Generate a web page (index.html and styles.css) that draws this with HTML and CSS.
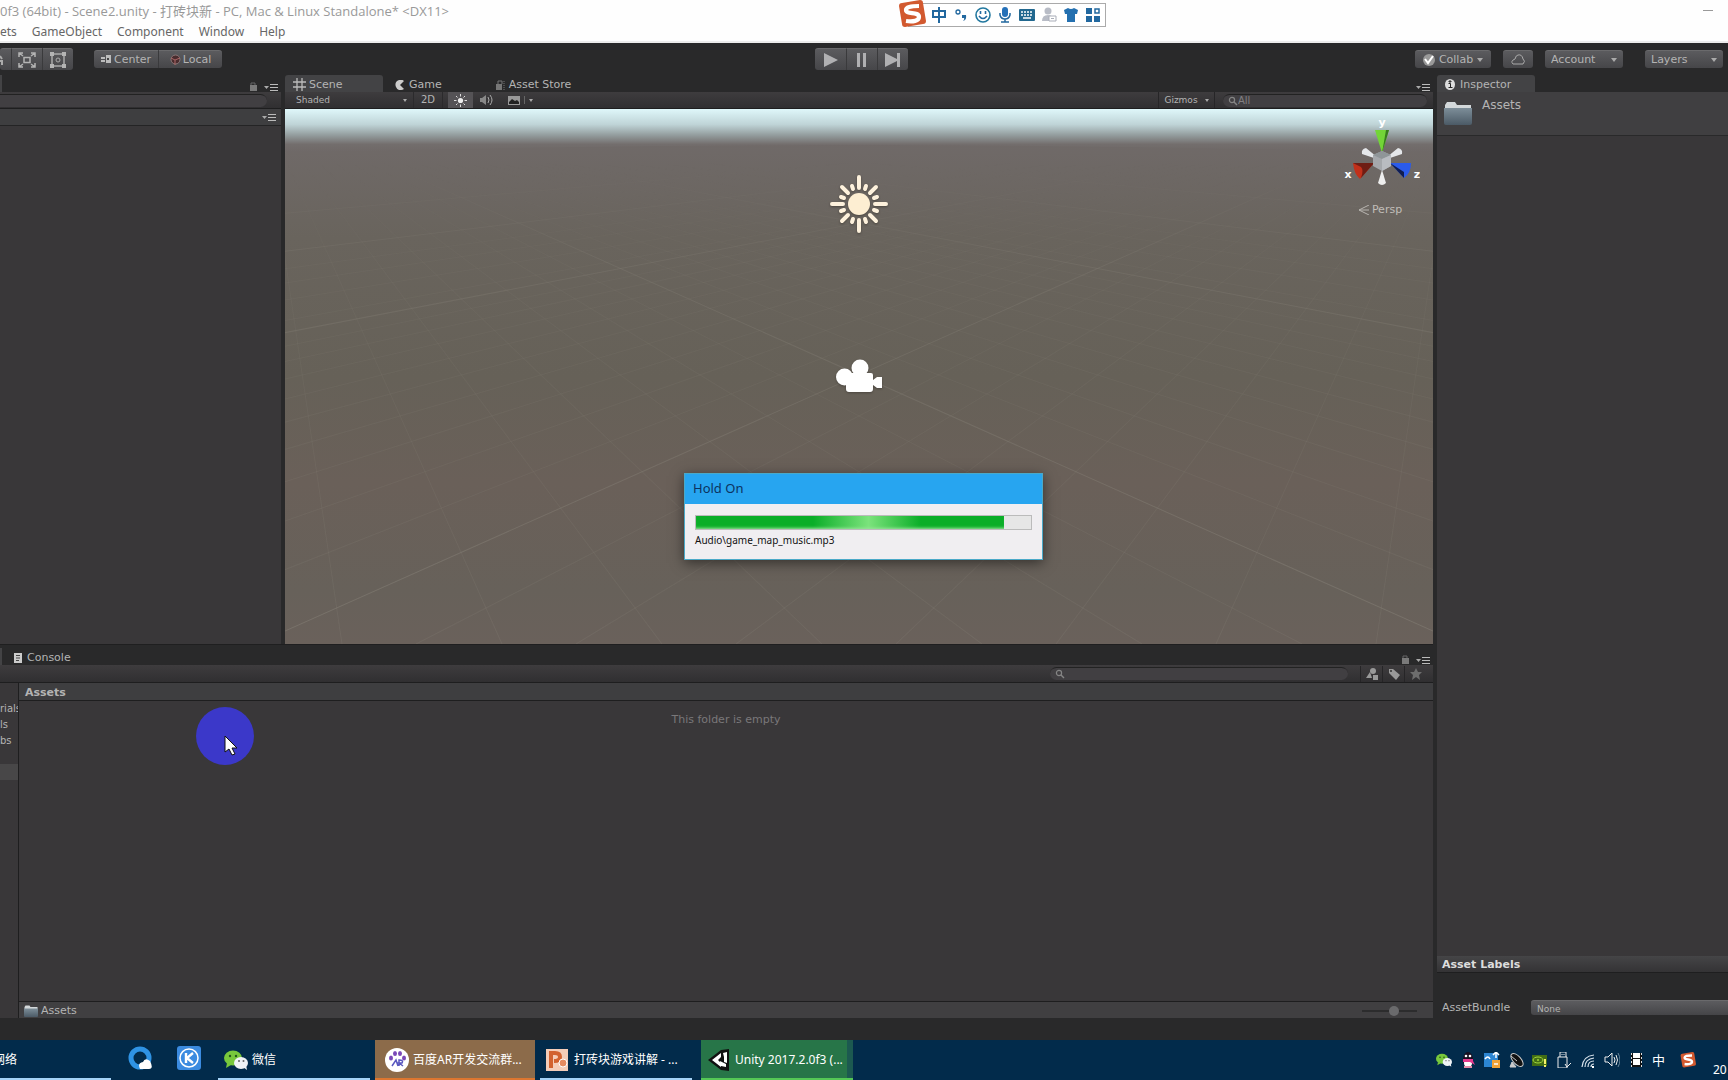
FILE: index.html
```html
<!DOCTYPE html>
<html lang="en">
<head>
  <meta charset="UTF-8" />
  <meta name="viewport" content="width=device-width, initial-scale=1.0" />
  <title>Scene2.unity</title>
  <link rel="stylesheet" href="styles.css">
</head>
<body>
  <!-- shared shapes -->
  <svg class="defs" width="0" height="0" aria-hidden="true">
    <symbol id="lock" viewBox="0 0 9 10"><path d="M2 5V2h4v3" fill="none" stroke="#666" stroke-width="1"/><path d="M1 4h7v6H1z" fill="#7a7a7a"/></symbol>
    <symbol id="menu" viewBox="0 0 14 8"><path d="M0 3h5L2.5 6z" fill="#aaa"/><path d="M6 1.5h8M6 4.5h8M6 7.5h8" stroke="#bbb" stroke-width="1"/></symbol>
    <symbol id="search" viewBox="0 0 10 10"><circle cx="4" cy="4" r="2.6" fill="none" stroke="#858585" stroke-width="1.2"/><path d="M6 6l3 3" stroke="#858585" stroke-width="1.4"/></symbol>
    <symbol id="wechat" viewBox="0 0 24 20"><ellipse cx="9" cy="8" rx="9" ry="7.5" fill="#78c83c"/><path d="M3 13l-1 5 5-3z" fill="#78c83c"/><circle cx="6" cy="6" r="1.2" fill="#24551c"/><circle cx="12" cy="6" r="1.2" fill="#24551c"/><ellipse cx="17" cy="13" rx="7" ry="6" fill="#f0f3f6"/><path d="M19 17l4 3-1-5z" fill="#f0f3f6"/><circle cx="15" cy="11" r="1" fill="#666"/><circle cx="19.500" cy="11" r="1" fill="#666"/></symbol>
    <symbol id="sogou" viewBox="0 0 28 28"><path d="M1 6Q1 3 4 3L22 0q3 0 3 3l3 18q0 3-3 3L7 27q-3 0-3-3z" fill="#d2592f"/><path d="M21 6Q8 6 8 10c0 5 13 1 13 7 0 4-6 5-13 4" fill="none" stroke="#fff" stroke-width="4.200"/></symbol>
    <symbol id="folder" viewBox="0 0 28 24"><path d="M1 4l2-3h8l2 3h14v6H1z" fill="#d3d8da"/><path d="M0 7h28v15q0 2-2 2H2q-2 0-2-2z" fill="url(#folderFill)"/></symbol>
    <linearGradient id="folderFill" x2="0" y2="1"><stop stop-color="#7d8e99"/><stop offset="1" stop-color="#4b5a66"/></linearGradient>
  </svg>

  <header class="titlebar">
    <div class="window-title">0f3 (64bit) - Scene2.unity - 打砖块新 - PC, Mac &amp; Linux Standalone* &lt;DX11&gt;</div>
    <button class="minimize" aria-label="Minimize"></button>
    <nav class="menubar">
      <a href="#">ets</a><a href="#">GameObject</a><a href="#">Component</a><a href="#">Window</a><a href="#">Help</a>
    </nav>
  </header>

  <div class="ime">
    <svg class="ime-logo" width="28" height="28"><use href="#sogou"/></svg>
    <svg width="16" height="16" viewBox="0 0 16 16"><path d="M2 4h12v6H2zM8 0v16" fill="none" stroke="#22689f" stroke-width="2"/></svg>
    <svg width="16" height="16" viewBox="0 0 16 16"><circle cx="5" cy="5" r="2" fill="none" stroke="#22689f" stroke-width="1.300"/><path d="M9 8h4q1 5-3 6 2-2 1-3H9z" fill="#22689f"/></svg>
    <svg width="16" height="16" viewBox="0 0 16 16"><circle cx="8" cy="8" r="7" fill="none" stroke="#22789f" stroke-width="1.600"/><path d="M4 9q4 5 8 0M5.500 4v3M10.500 4v3" fill="none" stroke="#22689f" stroke-width="1.600"/></svg>
    <svg width="16" height="16" viewBox="0 0 16 16"><rect x="5" y="0" width="6" height="10" rx="3" fill="#2470b8"/><path d="M3 6v2q1 4 5 4t5-4V6M8 12v3M4 15h8" fill="none" stroke="#22689f" stroke-width="1.500"/></svg>
    <svg width="16" height="16" viewBox="0 0 16 16"><rect x="0" y="2" width="16" height="12" rx="1" fill="#22688f"/><path d="M2 5h12M2 8h12" stroke="#fff" stroke-width="1.500" stroke-dasharray="2 1"/><path d="M4 11h8" stroke="#fff" stroke-width="1.500"/></svg>
    <svg width="16" height="16" viewBox="0 0 16 16"><circle cx="7" cy="4" r="3.500" fill="#b8bcc6"/><path d="M1 14q0-6 6-6t6 6z" fill="#b8bcc6"/><path d="M8 9h7v5H8zM10 11.500h3" fill="#fff" stroke="#a9adb8"/></svg>
    <svg width="16" height="16" viewBox="0 0 16 16"><path d="M1 3l4-2q3 2 6 0l4 2-1 4h-2v8H4V7H2z" fill="#2470b0"/></svg>
    <svg width="16" height="16" viewBox="0 0 16 16"><path d="M1 1h6v6H1zM1 9h6v6H1zM9 9h6v6H9z" fill="#22689f"/><path d="M10 2h4v4h-4z" fill="none" stroke="#22689f" stroke-width="1.500"/></svg>
  </div>

  <div class="toolbar">
    <div class="edit-tools">
      <div class="group tall">
        <button class="tool-cut" aria-label="Rotate"><svg width="3" height="14" viewBox="0 0 3 14"><path d="M0 3l2 3M0 8h2v4" fill="none" stroke="#aaa" stroke-width="2"/></svg></button>
        <button aria-label="Scale"><svg width="18" height="16" viewBox="0 0 18 16"><g fill="none" stroke="#b4b4b4" stroke-width="1.500"><path d="M6 5.500h6v5H6z"/><path d="M1 5V1h4M13 1h4v4M17 11v4h-4M5 15H1v-4M1 1l4 3M17 1l-4 3M1 15l4-3M17 15l-4-3"/></g></svg></button>
        <button aria-label="Rect"><svg width="18" height="18" viewBox="0 0 18 18"><path d="M3 3h12v12H3z" fill="none" stroke="#aaa" stroke-width="1.500"/><circle cx="9" cy="9" r="2" fill="none" stroke="#aaa"/><path d="M1 1h4v4H1zM13 1h4v4h-4zM1 13h4v4H1zM13 13h4v4h-4z" fill="#b4b4b4"/></svg></button>
      </div>
      <div class="group pivot">
        <button><svg width="11" height="9" viewBox="0 0 11 9"><path d="M0 2h4v2H0zM0 5h4v2H0zM5 0h5v8H5z" fill="#bbb"/><path d="M6 3h2v2H6z" fill="#444"/></svg>Center</button>
        <button><svg width="11" height="11" viewBox="0 0 11 11"><circle cx="5.500" cy="5.500" r="4.500" fill="#4a2c2e" stroke="#8a7777"/><path d="M1 4l4 2 5-2M5 6v5" fill="none" stroke="#a66"/></svg>Local</button>
      </div>
    </div>
    <div class="group tall play">
      <button aria-label="Play"><svg width="14" height="14" viewBox="0 0 14 14"><path d="M0 0l14 7-14 7z"/></svg></button>
      <button aria-label="Pause"><svg width="10" height="14" viewBox="0 0 10 14"><path d="M0 0h3v14H0zM6 0h3v14H6z"/></svg></button>
      <button aria-label="Step"><svg width="16" height="14" viewBox="0 0 16 14"><path d="M0 0l12 6V0h3v14h-3V8L0 14z"/></svg></button>
    </div>
    <div class="services">
      <button class="btn collab"><svg width="12" height="12" viewBox="0 0 12 12"><circle cx="6" cy="6" r="6" fill="#999"/><path d="M2 5l3 4 5-7" fill="none" stroke="#fff" stroke-width="2"/></svg>Collab<i class="caret"></i></button>
      <button class="btn cloud" aria-label="Services"><svg width="14" height="11" viewBox="0 0 14 11"><path d="M2 10h10q3-3 0-5-1-5-5-4-2 0-3 4-5 2-2 5z" fill="none" stroke="#aaa"/></svg></button>
      <label class="pick btn"><select aria-label="Account"><option>Account</option></select></label>
      <label class="pick btn layers"><select aria-label="Layers"><option>Layers</option></select></label>
    </div>
  </div>

  <main class="workspace">
    <div class="editor">
      <section class="hierarchy">
        <div class="tabs hierarchy-tabs"><span class="tab-edge"></span><span class="panel-tools"><svg width="9" height="10"><use href="#lock"/></svg><svg width="14" height="8"><use href="#menu"/></svg></span></div>
        <div class="bar"><input class="field hierarchy-search" type="text" aria-label="Search hierarchy"></div>
        <div class="subhead"><svg width="14" height="8"><use href="#menu"/></svg></div>
      </section>

      <section class="scene">
        <div class="tabs">
          <button class="tab active"><svg width="13" height="13" viewBox="0 0 13 13"><path d="M4 0v13M9 0v13M0 4h13M0 9h13" stroke="#bbb" stroke-width="1.300"/></svg>Scene</button>
          <button class="tab game-tab"><svg width="10" height="10" viewBox="0 0 10 10"><path d="M9 1L5 5l4 4Q3 12 1 7T4 0q3-1 5 1z" fill="#ccc"/></svg>Game</button>
          <button class="tab store-tab"><svg width="9" height="10" viewBox="0 0 9 10"><path d="M2 4V1h4v3" fill="none" stroke="#777"/><path d="M0 4h6v6H0z" fill="#777"/><path d="M8 1v9" stroke="#777" stroke-dasharray="1 1"/></svg>Asset Store</button>
          <span class="panel-tools"><svg width="14" height="8"><use href="#menu"/></svg></span>
        </div>
        <div class="bar scene-bar">
          <label class="pick shading"><select aria-label="Draw mode"><option>Shaded</option></select></label>
          <button class="mode">2D</button>
          <button class="on" aria-label="Lighting"><svg width="13" height="13" viewBox="0 0 13 13"><circle cx="6.500" cy="6.500" r="2.600" fill="#eee"/><path d="M6.500 0v2.500M6.500 10.500V13M0 6.500h2.500M10.500 6.500H13M2 2l1.500 1.500M9.500 9.500L11 11M11 2L9.500 3.500M2 11l1.500-1.500" stroke="#ddd"/></svg></button>
          <button aria-label="Audio"><svg width="14" height="12" viewBox="0 0 14 12"><path d="M0 4h2l4-3v10L2 8H0z" fill="#888"/><path d="M8 3q2 3 0 6M10 1q4 5 0 10" fill="none" stroke="#aaa"/></svg></button>
          <button class="effects" aria-label="Effects"><svg width="12" height="9" viewBox="0 0 12 9"><path d="M0 0h12v9H0z" fill="#999"/><path d="M1 8V6l3-3 3 2 2-1 2 2v2z" fill="#222"/></svg><i class="split"></i><i class="caret"></i></button>
          <button class="gizmos">Gizmos<i class="caret"></i></button>
          <label class="searchbox scene-search"><svg width="10" height="10"><use href="#search"/></svg><input type="text" value="All" aria-label="Search scene"></label>
        </div>

        <div class="viewport">
          <svg class="ground" viewBox="0 0 1148 534" preserveAspectRatio="none" aria-hidden="true">
            <defs>
              <linearGradient id="land" x2="0" y2="1"><stop offset=".05" stop-color="#706a69"/><stop offset=".24" stop-color="#69645d"/><stop offset=".5" stop-color="#666158"/><stop offset=".7" stop-color="#6a6059"/><stop offset=".9" stop-color="#67615a"/><stop offset="1" stop-color="#6a615b"/></linearGradient>
              <linearGradient id="sky" x2="0" y2="1"><stop stop-color="#dff7fa"/><stop offset=".35" stop-color="#bfd4d7"/><stop offset=".6" stop-color="#929b9c"/><stop offset=".8" stop-color="#736e6d"/><stop offset="1" stop-color="#706a69" stop-opacity="0"/></linearGradient>
              <linearGradient id="fade" x2="0" y2="1"><stop offset=".1" stop-color="#000"/><stop offset=".3" stop-color="#888"/><stop offset="1" stop-color="#fff"/></linearGradient>
              <mask id="far" maskUnits="userSpaceOnUse" x="0" y="0" width="1148" height="534"><path d="M0 0h1148v534H0z" fill="url(#fade)"/></mask>
              <!-- one family of ground lines, all meeting at a vanishing point -->
              <g id="lines" fill="none">
                <path stroke="#8a857d" stroke-opacity=".2" d="M1170 0L1091 534M1170 0L931 534M1170 0L771 534M1170 0L611 534M1170 0L451 534M1170 0L291 534M1170 0L131 534M1170 0L-189 534M1170 0L-349 534M1170 0L-509 534M1170 0L-669 534M1170 0L-829 534M1170 0L-989 534M1170 0L-1149 534M1170 0L-1309 534M1170 0L-1469 534M1170 0L-1789 534M1170 0L-2109 534M1170 0L-2429 534M1170 0L-2749 534"/>
                <path stroke="#918b83" stroke-opacity=".4" d="M1170 0L-29 534M1170 0L-1629 534M1170 0L-3229 534M1170 0L-4829 534"/>
              </g>
            </defs>
            <path d="M0 0h1148v534H0z" fill="url(#land)"/>
            <g mask="url(#far)"><use href="#lines"/><use href="#lines" transform="matrix(-1 0 0 1 1148 0)"/></g>
            <path d="M0 0h1148v44Q574 28 0 44z" fill="url(#sky)"/>
          </svg>
          <svg class="light" width="60" height="60" viewBox="-30 -30 60 60" aria-hidden="true">
            <g stroke-linecap="round" stroke="#fdf1dc" stroke-width="4">
              <path d="M0-27V-16M0 27V16M-27 0H-16M27 0H16M-17-17l6 6M17-17l-6 6M-17 17l6-6M17 17l-6-6"/>
              <path d="M-7-18l1 3M7-18l-1 3M-7 18l1-3M7 18l-1-3M-18-7l3 1M-18 7l3-1M18-7l-3 1M18 7l-3-1"/>
            </g>
            <circle r="11" fill="#fdeed2"/>
          </svg>
          <svg class="camera" width="46" height="34" viewBox="0 0 46 34" fill="#fff" aria-hidden="true"><circle cx="8.500" cy="18" r="8.500"/><circle cx="24" cy="9" r="8.500"/><path d="M10 14h25q2 0 2 2v5l4-3h5v11h-5l-4-3v4q0 3-3 3H13q-3 0-3-3z"/></svg>
          <div class="gizmo">
            <svg width="76" height="72" viewBox="0 0 76 72" aria-hidden="true">
              <text x="38" y="8" class="axis">y</text><text x="4" y="60" class="axis">x</text><text x="73" y="60" class="axis">z</text>
              <path d="M18 36q-1-5 4-6l11 9-3 1zM58 36q1-5-4-6l-11 9 3 1z" fill="#e5e7ea"/>
              <path d="M31 12h14l-7 23z" fill="#73d537"/><path d="M42 12h3l-7 23z" fill="#387c1f"/>
              <path d="M9 45h21L16 61q-6-5-7-16z" fill="#c1301a"/><path d="M9 45h21L17 60q3-8 0-11z" fill="#6e1d14"/>
              <path d="M46 45h21q0 10-7 15z" fill="#2b5bea"/><path d="M46 45l14 15v-6z" fill="#101d50"/>
              <path d="M34 65l4-13 4 13q-4 4-8 0z" fill="#eee"/>
              <path d="M29 37l9-4 9 4v11l-9 5-9-5z" fill="#a5a8ac"/><path d="M29 37l9-4 9 4-9 4z" fill="#8f9598"/><path d="M38 41l9-4v11l-9 5z" fill="#b9bcc1"/>
            </svg>
            <button class="persp"><svg width="12" height="10" viewBox="0 0 12 10"><path d="M11 0L1 5l10 5M1 5h10" fill="none" stroke="#b8b5b0"/></svg>Persp</button>
          </div>
        </div>
      </section>

      <section class="project">
        <div class="tabs project-tabs">
          <span class="tab-edge"></span>
          <button class="tab console-tab"><svg width="8" height="10" viewBox="0 0 8 10"><path d="M0 0h8v10H0z" fill="#ccc"/><path d="M2 2.500h4M2 5h4M2 7.500h3" stroke="#444"/></svg>Console</button>
          <span class="panel-tools"><svg width="9" height="10"><use href="#lock"/></svg><svg width="14" height="8"><use href="#menu"/></svg></span>
        </div>
        <div class="bar project-bar">
          <label class="searchbox project-search"><svg width="10" height="10"><use href="#search"/></svg><input type="text" aria-label="Search project"></label>
          <button aria-label="Filter by type"><svg width="12" height="12" viewBox="0 0 12 12" fill="#999"><circle cx="7" cy="3" r="3"/><path d="M0 10l4-6 2 6zM7 7h5v5H7z"/></svg></button>
          <button aria-label="Filter by label"><svg width="12" height="12" viewBox="0 0 12 12"><path d="M1 1h4l7 6-4 5-7-7z" fill="#999"/><circle cx="3" cy="3" r="1" fill="#333"/></svg></button>
          <button aria-label="Favorites"><svg width="12" height="12" viewBox="0 0 12 12"><path d="M6 0l2 4h4L9 7l1 5-4-3-4 3 1-5-3-3h4z" fill="#6d6d6d"/></svg></button>
        </div>
        <div class="project-body">
          <ul class="tree"><li>rials</li><li>ls</li><li>bs</li><li></li><li class="selected"></li></ul>
          <div class="browser">
            <h2 class="crumb">Assets</h2>
            <p class="empty">This folder is empty</p>
            <div class="footer"><svg width="14" height="12"><use href="#folder"/></svg><span>Assets</span><input class="zoom" type="range" min="0" max="100" value="60" aria-label="Icon size"></div>
          </div>
        </div>
      </section>
    </div>

    <aside class="inspector">
      <div class="tabs"><button class="tab active inspector-tab"><svg width="10" height="11" viewBox="0 0 10 11"><ellipse cx="5" cy="5.500" rx="5" ry="5.500" fill="#ddd"/><path d="M4 2h2v1H4zM3.500 4.500H5.500V8.500M3.500 8.500h4" stroke="#222" fill="none"/></svg>Inspector</button></div>
      <div class="asset-head"><svg width="28" height="24"><use href="#folder"/></svg><span>Assets</span></div>
      <div class="inspector-space"></div>
      <h2 class="labels-head">Asset Labels</h2>
      <div class="labels-body"><label for="bundle">AssetBundle</label><select id="bundle"><option>None</option></select></div>
    </aside>
  </main>

  <footer class="taskbar">
    <button class="task task-net">网络</button>
    <button class="task-icon" aria-label="QQ Browser"><svg width="24" height="24" viewBox="0 0 24 24"><circle cx="12" cy="12" r="9" fill="none" stroke="#2f93e4" stroke-width="5"/><path d="M12 23q-3-6 3-7 2-5 7-1 4 8-1 8z" fill="#fff"/></svg></button>
    <button class="task-icon" aria-label="KuGou"><svg width="24" height="24" viewBox="0 0 24 24"><rect width="24" height="24" rx="3" fill="#3b8be0"/><circle cx="12" cy="12" r="9" fill="none" stroke="#fff" stroke-width="1.500"/><path d="M9 7v10M16 7l-6 5 6 5" fill="none" stroke="#fff" stroke-width="2.400"/></svg></button>
    <button class="task task-wechat"><svg width="24" height="20"><use href="#wechat"/></svg>微信</button>
    <button class="task alert"><svg width="24" height="24" viewBox="0 0 24 24"><circle cx="12" cy="12" r="12" fill="#fff"/><g fill="#7a48b8"><ellipse cx="6" cy="10" rx="2" ry="2.500"/><ellipse cx="10" cy="5.500" rx="2" ry="2.500"/><ellipse cx="15" cy="5.500" rx="2" ry="2.500"/><ellipse cx="19" cy="10" rx="2" ry="2.500"/></g><path d="M7 18l4-6 2 6M14 18v-6q5 0 3 3h-3l4 3" fill="none" stroke="#5a58c0" stroke-width="1.500"/></svg>百度AR开发交流群...</button>
    <button class="task task-ppt"><svg width="22" height="22" viewBox="0 0 22 22"><path d="M0 0h22v22H0z" fill="#f4cdb8"/><path d="M5 19V4h4q5 0 5 4t-6 4" fill="none" stroke="#d2622f" stroke-width="4"/><circle cx="17" cy="14" r="4" fill="#e58b60" stroke="#fff"/></svg>打砖块游戏讲解 - ...</button>
    <button class="task current"><svg width="22" height="22" viewBox="0 0 22 22"><path d="M0 11L13 1l8-1v22l-8-1z" fill="#111"/><path d="M4 11l9-7v4l-3 3 3 3v4zM15 4l4-1v11l-3-1V8zM12 12l6 3v3l-5-1z" fill="#fff"/></svg>Unity 2017.2.0f3 (...</button>
    <div class="tray">
      <svg width="16" height="16"><use href="#wechat"/></svg>
      <svg width="16" height="16" viewBox="0 0 16 16"><ellipse cx="8" cy="8" rx="5" ry="8" fill="#1a1020"/><ellipse cx="8" cy="11" rx="4" ry="4" fill="#fff"/><path d="M3 7h10v2l2 4-5-3H3z" fill="#e33a8e"/><circle cx="6" cy="4" r="1.300" fill="#fff"/><circle cx="10" cy="4" r="1.300" fill="#fff"/><path d="M4 14h8v2H4z" fill="#e68aa8"/></svg>
      <svg width="16" height="16" viewBox="0 0 16 16"><path d="M0 1h14v14H0z" fill="#2c86d3"/><path d="M1 7q3-4 5 0M12 0v6M9 3l3-3 3 3" fill="none" stroke="#fff" stroke-width="1.500"/><path d="M8 8h8v8H8z" fill="#f0a337"/><path d="M10 12h4" stroke="#fff" stroke-width="1.500"/></svg>
      <svg width="16" height="16" viewBox="0 0 16 16"><ellipse cx="9" cy="8" rx="4" ry="8" transform="rotate(-42 9 8)" fill="#111" stroke="#ccc"/><path d="M3 4l6 5M4 10l-2 5h6z" fill="#ccc" stroke="#ccc"/></svg>
      <svg width="16" height="16" viewBox="0 0 16 16"><path d="M0 3h15v11H0z" fill="#426d15"/><ellipse cx="6" cy="8" rx="5" ry="3" fill="none" stroke="#a2d83c"/><circle cx="6" cy="8" r="1" fill="#a2d83c"/><path d="M13 7v5M13 13v2" stroke="#f4f26a" stroke-width="2"/></svg>
      <svg width="16" height="16" viewBox="0 0 16 16"><path d="M4 5V0h6v5M2 5h9v11H2z" fill="none" stroke="#eee"/><path d="M9 12l2 3 4-4M6 2v1M8 2v1" fill="none" stroke="#eee"/></svg>
      <svg width="16" height="16" viewBox="0 0 16 16"><path d="M2 15Q3 4 14 3M5 15Q5 7 14 6M8 15q0-6 6-6M11 15q0-3 3-3" fill="none" stroke="#dce6ee" stroke-width="1.200"/><path d="M12 14h2v2h-2z" fill="#fff"/></svg>
      <svg width="16" height="16" viewBox="0 0 16 16"><path d="M1 5h3l4-4v13l-4-4H1zM10 5q2 3 0 6M12 3q3 5 0 10" fill="none" stroke="#eee"/><path d="M14 1q4 7 0 14" fill="none" stroke="#68869a"/></svg>
      <svg width="16" height="16" viewBox="0 0 16 16"><path d="M3 1h11v14H3z" fill="#111"/><path d="M5 1h7v5H5zM5 7h7v6H5z" fill="#fff"/><path d="M3.500 1v14M13.500 1v14" stroke="#ddd" stroke-dasharray="2 2"/></svg>
      <span class="ime-state">中</span>
      <svg class="tray-sogou" width="16" height="16"><use href="#sogou"/></svg>
    </div>
    <span class="clock">20</span>
  </footer>

  <div class="dialog" role="dialog" aria-labelledby="dialog-title">
    <h1 id="dialog-title">Hold On</h1>
    <div class="dialog-body">
      <progress id="import" value="92" max="100"></progress>
      <label for="import">Audio\game_map_music.mp3</label>
    </div>
  </div>

  <div class="pointer" aria-hidden="true"><svg width="14" height="21" viewBox="0 0 14 21"><path d="M1 1v16l4-3 3 6 3-1-3-6h5z" fill="#fff" stroke="#111"/></svg></div>
</body>
</html>
```
FILE: styles.css
```css
* {
  box-sizing: border-box;
  margin: 0;
  padding: 0;
}

body {
  display: flex;
  flex-direction: column;
  min-height: 100vh;
  background: #29292a;
  color: #b4b4b4;
  font-family: "DejaVu Sans", "Noto Sans CJK SC", sans-serif;
  font-size: 11px;
  line-height: 16px;
  overflow: hidden;
  position: relative;
}

button,
input,
select {
  font: inherit;
  color: inherit;
  background: none;
  border: 0;
  outline: 0;
  appearance: none;
}

svg {
  flex: none;
}

.defs {
  position: absolute;
}

/* window title and menus */
.titlebar {
  display: grid;
  grid-template-columns: 1fr auto;
  grid-template-rows: 20px 1fr;
  background: #fefefe;
  border-bottom: 2px solid #ececec;
  font-family: "Open Sans", "Noto Sans CJK SC", sans-serif;
  height: 43px;
}

.window-title {
  color: #999;
  font-size: 13px;
  line-height: 22px;
  white-space: nowrap;
}

.minimize {
  width: 10px;
  height: 1px;
  background: #999;
  margin: 10px 15px 0 0;
}

.menubar {
  display: flex;
  gap: 15px;
  font-family: "Noto Sans", sans-serif;
  font-size: 12px;
  line-height: 24px;
}

.menubar a {
  color: #666;
  text-decoration: none;
}

.ime {
  position: absolute;
  top: 3px;
  left: 908px;
  display: flex;
  align-items: center;
  gap: 6px;
  height: 24px;
  padding: 0 4px 0 22px;
  background: #fff;
  border: 1px solid #aaa;
}

.ime-logo {
  position: absolute;
  left: -11px;
  top: -4px;
}

/* main toolbar */
.toolbar {
  display: grid;
  grid-template-columns: 1fr auto 1fr;
  align-items: center;
  height: 32px;
  padding: 0 5px 0 0;
}

.edit-tools {
  display: flex;
  align-items: center;
  gap: 21px;
}

.group {
  display: flex;
}

.group button,
.btn {
  display: flex;
  align-items: center;
  justify-content: center;
  gap: 2px;
  height: 18px;
  background: linear-gradient(#5b5b5e, #464649);
  border-top: 1px solid #6a6a6c;
}

.group button + button {
  border-left: 1px solid #3a3a3c;
}

.group button:first-child {
  border-radius: 3px 0 0 3px;
}

.group button:last-child {
  border-radius: 0 3px 3px 0;
}

.tall button {
  width: 31px;
  height: 22px;
}

.tall .tool-cut {
  width: 11px;
  border-radius: 0;
  justify-content: flex-start;
}

.pivot button {
  width: 64px;
}

.play {
  fill: #b0b0b2;
}

.services {
  display: flex;
  justify-content: flex-end;
  gap: 12px;
}

.btn {
  border-radius: 3px;
}

.collab {
  width: 76px;
  gap: 4px;
}

.cloud {
  width: 30px;
}

.caret,
.pick::after {
  content: "";
  border: 3px solid transparent;
  border-top: 4px solid #aaa;
  border-bottom: 0;
}

.pick {
  display: flex;
  align-items: center;
}

.pick select {
  flex: 1;
  min-width: 0;
}

.pick.btn {
  width: 78px;
  padding: 0 6px;
}

.layers {
  margin-left: 10px;
}

/* dock layout */
.workspace {
  flex: 1;
  display: grid;
  grid-template-columns: 1fr 291px;
  gap: 4px;
  padding-bottom: 22px;
}

.editor {
  display: grid;
  grid-template-columns: 281px 1fr;
  grid-template-rows: 569fr 374fr;
  column-gap: 4px;
}

.hierarchy,
.scene,
.project,
.inspector,
.browser {
  display: flex;
  flex-direction: column;
  min-width: 0;
}

.tabs {
  display: flex;
  height: 17px;
}

.tab {
  display: flex;
  align-items: center;
  gap: 4px;
  padding: 2px 8px 0;
  height: 17px;
}

.tab.active {
  width: 98px;
  gap: 3px;
  background: #434345;
  border-radius: 3px 3px 0 0;
}

.tab-edge {
  width: 2px;
  background: #434345;
}

.game-tab {
  padding-left: 12px;
}

.store-tab {
  margin-left: 38px;
}

.panel-tools {
  display: flex;
  align-items: flex-end;
  gap: 6px;
  margin-left: auto;
  padding: 0 3px 1px 0;
}

.bar {
  display: flex;
  align-items: center;
  height: 17px;
  background: linear-gradient(#3e3c3e, #302f31);
  border-bottom: 1px solid #1e1e1f;
}

.bar button {
  display: flex;
  align-items: center;
  justify-content: center;
  height: 16px;
}

.hierarchy,
.project-body {
  background: #393739;
}

.hierarchy-tabs {
  background: #29292a;
}

.field,
.searchbox {
  height: 13px;
  background: #413f42;
  border-top: 1px solid #222;
  border-radius: 0 7px 7px 0;
}

.hierarchy-search {
  width: 267px;
}

.subhead {
  display: flex;
  align-items: center;
  justify-content: flex-end;
  height: 17px;
  padding-right: 5px;
  background: #3e3e40;
  border-bottom: 1px solid #242425;
}

.searchbox {
  display: flex;
  align-items: center;
  padding-left: 5px;
  border-radius: 7px;
}

.searchbox input {
  min-width: 0;
  flex: 1;
  height: 12px;
  color: #828082;
  font-size: 10px;
}

/* scene view */
.scene-bar {
  font-size: 9px;
}

.shading {
  width: 128px;
  padding: 0 6px 0 11px;
}

.scene-bar button {
  width: 28px;
}

.scene-bar .mode {
  width: 30px;
  font-size: 10px;
  border: 1px solid #2b2a2c;
  border-width: 0 1px;
}

.scene-bar .on {
  width: 25px;
  margin-left: 5px;
  background: #555356;
}

.scene-bar .effects {
  width: 38px;
  gap: 4px;
}

.split {
  width: 1px;
  height: 8px;
  background: #666;
}

.shading::after,
.scene-bar .caret {
  border-width: 3px 2px 0;
}

.scene-bar .gizmos {
  width: 57px;
  margin-left: auto;
  gap: 7px;
  border: 1px solid #262527;
  border-width: 0 1px;
}

.scene-search {
  width: 204px;
  margin: 0 6px 0 8px;
}

.viewport {
  position: relative;
  flex: 1;
  overflow: hidden;
}

.ground {
  position: absolute;
  width: 100%;
  height: 100%;
}

.light,
.camera {
  position: absolute;
  left: 50%;
  transform: translateX(-50%);
  filter: drop-shadow(0 1px 1px #4b463f);
}

.light {
  top: 65px;
}

.camera {
  top: 250px;
}

.gizmo {
  position: absolute;
  top: 9px;
  right: 13px;
  display: flex;
  flex-direction: column;
  align-items: center;
  gap: 12px;
}

.axis {
  font-size: 11px;
  font-weight: bold;
  fill: #fff;
  text-anchor: middle;
}

.persp {
  display: flex;
  align-items: center;
  gap: 2px;
  padding-right: 4px;
  color: #c0bdb8;
}

/* project browser */
.project {
  grid-column: 1 / -1;
}

.project-tabs {
  height: 21px;
  padding-top: 3px;
  border-top: 1px solid #1f1f20;
}

.console-tab {
  padding-left: 12px;
  gap: 5px;
}

.project-bar {
  height: 18px;
  justify-content: flex-end;
  padding-right: 7px;
}

.project-search {
  width: 298px;
  margin-right: 12px;
}

.project-bar button {
  width: 22px;
  border-left: 1px solid #262527;
}

.project-body {
  flex: 1;
  display: grid;
  grid-template-columns: 19px 1fr;
}

.tree {
  list-style: none;
  padding-top: 17px;
  border-right: 1px solid #1e1e1f;
  overflow: hidden;
}

.tree li {
  height: 16px;
  line-height: 18px;
  font-size: 10px;
}

.tree .selected {
  background: #484748;
}

.crumb {
  height: 18px;
  padding-left: 6px;
  line-height: 20px;
  font-size: 11px;
  background: #3e3e40;
  border-bottom: 1px solid #1e1e1f;
}

.empty {
  flex: 1;
  padding-top: 11px;
  text-align: center;
  color: #7a787a;
}

.footer {
  display: flex;
  align-items: center;
  gap: 3px;
  height: 17px;
  padding: 1px 16px 0 5px;
  background: #403f41;
  border-top: 1px solid #1e1e1f;
}

.zoom {
  width: 55px;
  height: 10px;
  margin-left: auto;
  background: linear-gradient(#2c2c2d, #2c2c2d) center / 100% 2px no-repeat;
}

.zoom::-webkit-slider-thumb {
  appearance: none;
  width: 10px;
  height: 10px;
  border-radius: 50%;
  background: #6a6a6c;
}

/* inspector */
.inspector {
  background: #393739;
}

.inspector .tabs {
  background: #29292a;
}

.inspector .tab.active {
  gap: 5px;
}

.asset-head {
  display: flex;
  gap: 10px;
  height: 44px;
  padding: 9px 7px;
  background: #403f41;
  border-bottom: 1px solid #29292a;
  font-size: 12px;
}

.asset-head span {
  line-height: 8px;
}

.inspector-space {
  flex: 1;
}

.labels-head {
  height: 17px;
  padding-left: 5px;
  color: #ddd;
  font-size: 11px;
  line-height: 18px;
  background: linear-gradient(#454547, #343335);
  border-bottom: 1px solid #1e1e1f;
}

.labels-body {
  display: grid;
  grid-template-columns: 89px 1fr;
  align-items: center;
  height: 45px;
  padding: 24px 0 0 5px;
  background: #29292a;
}

.labels-body select {
  height: 15px;
  padding-left: 6px;
  font-size: 9px;
  background: linear-gradient(#5c5c5f, #454548);
  border-top: 1px solid #6a6a6c;
  border-radius: 3px 0 0 3px;
}

/* desktop taskbar */
.taskbar {
  display: flex;
  height: 40px;
  background: #022b4b;
  color: #fff;
  font-family: "Noto Sans", "Noto Sans CJK SC", sans-serif;
  font-size: 12px;
  overflow: hidden;
}

.task {
  display: flex;
  align-items: center;
  gap: 4px;
  height: 40px;
  padding: 2px 0 0 6px;
  white-space: nowrap;
  border-bottom: 2px solid #a5d3f7;
}

.task-net {
  width: 111px;
  padding-left: 0;
  text-indent: -7px;
}

.task-icon {
  width: 24px;
  height: 40px;
  margin-left: 17px;
}

.task-icon + .task-icon {
  margin-left: 25px;
}

.task-wechat {
  width: 152px;
  margin-left: 17px;
}

.alert {
  width: 160px;
  margin: 0 5px;
  padding-left: 10px;
  background: #8c6b4a;
  border-color: #dc7630;
}

.task-ppt {
  width: 152px;
  gap: 6px;
}

.current {
  width: 152px;
  margin-left: 9px;
  padding-left: 7px;
  gap: 5px;
  background: linear-gradient(to right, #277548 146px, #1c5950 146px);
  border-color: #55c855;
}

.tray {
  display: flex;
  align-items: center;
  gap: 8px;
  margin-left: auto;
}

.ime-state {
  width: 16px;
  font-size: 13px;
}

.tray-sogou {
  margin-left: 4px;
}

.clock {
  align-self: flex-end;
  width: 15px;
  margin-left: 17px;
  font-size: 12px;
  line-height: 20px;
}

/* import progress */
.dialog {
  position: absolute;
  top: 473px;
  left: calc(50% - 180px);
  width: 359px;
  background: #f0eef1;
  border: 1px solid #4aa9c8;
  color: #111;
  font-family: "Noto Sans", sans-serif;
  font-size: 10px;
  box-shadow: 0 3px 12px rgba(0, 0, 0, 0.5);
}

.dialog h1 {
  height: 30px;
  padding-left: 8px;
  line-height: 28px;
  font-size: 13px;
  font-weight: normal;
  color: #0c3360;
  background: #27a5f0;
}

.dialog-body {
  display: flex;
  flex-direction: column;
  gap: 2px;
  padding: 11px 10px;
  height: 55px;
}

progress {
  width: 100%;
  height: 15px;
  flex: none;
  appearance: none;
  border: 1px solid #bbb;
}

progress::-webkit-progress-bar {
  background: #e6e6e6;
}

progress::-webkit-progress-value {
  background: linear-gradient(to right, #0aae28 38%, #7be37c 56%, #0aae28 73%);
  box-shadow: inset 0 -3px 3px -2px #9be49b;
}

.pointer {
  position: absolute;
  top: 707px;
  left: 196px;
  width: 58px;
  height: 58px;
  padding: 28px 0 0 28px;
  border-radius: 50%;
  background: #3b38c9;
}
```
